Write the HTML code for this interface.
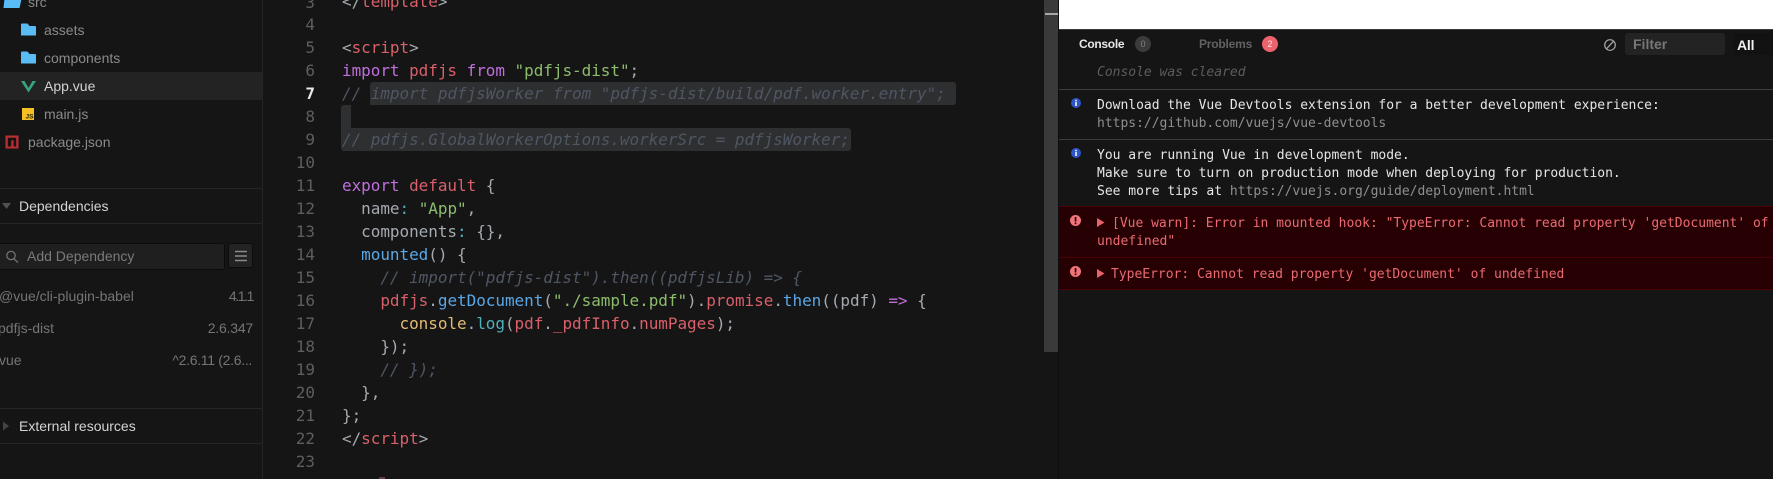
<!DOCTYPE html>
<html>
<head>
<meta charset="utf-8">
<style>
html,body{margin:0;padding:0;background:#151515;}
#r{position:relative;width:1773px;height:479px;overflow:hidden;background:#151515;font-family:"Liberation Sans",sans-serif;}
.a{position:absolute;white-space:pre;}
.f{font-size:14px;color:#8a8a8a;line-height:20px;height:20px;}
.h{font-size:14px;color:#d4d4d4;line-height:20px;height:20px;}
.dv{font-size:14px;color:#757575;line-height:20px;height:20px;}
.ln{position:absolute;left:270px;width:45px;text-align:right;font:16px/23px "DejaVu Sans Mono",monospace;color:#5e5e5e;height:23px;}
.c{position:absolute;left:342px;font:16px/23px "DejaVu Sans Mono",monospace;letter-spacing:-.05px;color:#abb2bf;white-space:pre;height:23px;margin-top:-1px;}
.k{color:#bf6fdb}.r{color:#d9606a}.g{color:#8dbd6c}.b{color:#5aa7e6}.t{color:#4fb0bd}.y{color:#e2bb73}.p{color:#a5a9b0}
.m{color:#4f5663;font-style:italic}
.sel{position:absolute;background:#2e2f30;}
.con{position:absolute;left:1097px;font:13px/18px "DejaVu Sans Mono",monospace;letter-spacing:-.01px;color:#e6e6e6;white-space:pre;height:18px;margin-top:1px;}
.u{color:#8f8f8f}
.e{color:#ea6a71}
.sep{position:absolute;height:1px;}
</style>
</head>
<body>
<div id="r">
<!-- sidebar -->
<div class="a" style="left:0;top:72px;width:262px;height:28px;background:#232323"></div>
<div class="a" style="left:262px;top:0;width:1px;height:479px;background:#262626"></div>
<svg class="a" style="left:0;top:0" width="262" height="220">
<path d="M5 -6H12L15 -3H22L19.500 8H3.500Z" fill="#5abcf5"/>
<path d="M21 24.500a1 1 0 0 1 1-1h5.500l2 2.500H35a1 1 0 0 1 1 1V35.500H21Z" fill="#5abcf5"/>
<path d="M21 52.500a1 1 0 0 1 1-1h5.500l2 2.500H35a1 1 0 0 1 1 1V63.500H21Z" fill="#5abcf5"/>
<path d="M21 81h3.500l4 7 4-7H36L28.500 92.500Z" fill="#35a77c"/>
<rect x="22" y="108" width="12" height="12" fill="#f5bf25"/>
<text x="25.500" y="118.700" font-family="Liberation Sans" font-weight="700" font-size="6.500" fill="#2a2100">JS</text>
<rect x="5.500" y="135.500" width="13" height="13" fill="#b92e33"/>
<path d="M7.800 146.500V137.800H16.200V146.500H13.600V140.200H11.200V146.500Z" fill="#1a1212"/>
<path d="M2 203H11L6.500 209Z" fill="#525252"/>
</svg>
<div class="a f" style="left:28px;top:-8px">src</div>
<div class="a f" style="left:44px;top:20px">assets</div>
<div class="a f" style="left:44px;top:48px">components</div>
<div class="a f" style="left:44px;top:76px;color:#d2d2d2">App.vue</div>
<div class="a f" style="left:44px;top:104px">main.js</div>
<div class="a f" style="left:28px;top:132px">package.json</div>
<div class="sep" style="left:0;top:188px;width:262px;background:#262626"></div>
<div class="a h" style="left:19px;top:196px">Dependencies</div>
<div class="sep" style="left:0;top:223px;width:262px;background:#262626"></div>
<div class="a" style="left:-3px;top:243px;width:226px;height:25px;background:#1f1f1f;border:1px solid #0c0c0c;border-radius:3px"></div>
<svg class="a" style="left:5px;top:250px" width="14" height="14"><circle cx="6" cy="5.500" r="4.200" fill="none" stroke="#777" stroke-width="1.200"/><path d="M9 8.800L13 12.500" stroke="#777" stroke-width="1.200"/></svg>
<div class="a dv" style="left:27px;top:246px;color:#7a7a7a">Add Dependency</div>
<div class="a" style="left:228px;top:243px;width:25px;height:25px;background:#232323;border:1px solid #0c0c0c;border-radius:3px;box-sizing:border-box"></div>
<svg class="a" style="left:234px;top:250px" width="14" height="12"><path d="M1 1.500H13M1 6H13M1 10.500H13" stroke="#8a8a8a" stroke-width="1.500"/></svg>
<div class="a dv" style="left:-1px;top:286px">@vue/cli-plugin-babel</div>
<div class="a dv" style="left:-2px;top:318px">pdfjs-dist</div>
<div class="a dv" style="left:-1px;top:350px">vue</div>
<div class="a dv" style="right:1520px;top:286px;letter-spacing:-1.400px">4.1.1</div>
<div class="a dv" style="right:1520px;top:318px;letter-spacing:-.2px">2.6.347</div>
<div class="a dv" style="right:1521px;top:350px;letter-spacing:-.3px">^2.6.11 (2.6...</div>
<div class="sep" style="left:0;top:408px;width:262px;background:#262626"></div>
<svg class="a" style="left:0;top:420px" width="14" height="12"><path d="M3 1.500L9 6L3 10.500Z" fill="#444"/></svg>
<div class="a h" style="left:19px;top:416px">External resources</div>
<div class="sep" style="left:0;top:443px;width:262px;background:#262626"></div>

<!-- gutter -->
<div class="ln" style="top:-9px">3</div>
<div class="ln" style="top:13px">4</div>
<div class="ln" style="top:36px">5</div>
<div class="ln" style="top:59px">6</div>
<div class="ln" style="top:82px;color:#e8e8e8;font-weight:700">7</div>
<div class="ln" style="top:105px">8</div>
<div class="ln" style="top:128px">9</div>
<div class="ln" style="top:151px">10</div>
<div class="ln" style="top:174px">11</div>
<div class="ln" style="top:197px">12</div>
<div class="ln" style="top:220px">13</div>
<div class="ln" style="top:243px">14</div>
<div class="ln" style="top:266px">15</div>
<div class="ln" style="top:289px">16</div>
<div class="ln" style="top:312px">17</div>
<div class="ln" style="top:335px">18</div>
<div class="ln" style="top:358px">19</div>
<div class="ln" style="top:381px">20</div>
<div class="ln" style="top:404px">21</div>
<div class="ln" style="top:427px">22</div>
<div class="ln" style="top:450px">23</div>

<!-- selection -->
<div class="sel" style="left:370px;top:82px;width:586px;height:23px;border-radius:3px 3px 3px 0"></div>
<div class="sel" style="left:341px;top:105px;width:10px;height:23px;border-radius:3px 0 0 0"></div>
<div class="sel" style="left:341px;top:128px;width:510px;height:23px;border-radius:0 3px 3px 3px"></div>

<!-- code -->
<div class="c" style="top:-9px"><span class="p">&lt;/</span><span class="r">template</span><span class="p">&gt;</span></div>
<div class="c" style="top:37px"><span class="p">&lt;</span><span class="r">script</span><span class="p">&gt;</span></div>
<div class="c" style="top:60px"><span class="k">import</span> <span class="r">pdfjs</span> <span class="k">from</span> <span class="g">"pdfjs-dist"</span><span class="p">;</span></div>
<div class="c m" style="top:83px">// import pdfjsWorker from "pdfjs-dist/build/pdf.worker.entry";</div>
<div class="c m" style="top:129px">// pdfjs.GlobalWorkerOptions.workerSrc = pdfjsWorker;</div>
<div class="c" style="top:175px"><span class="k">export</span> <span class="r">default</span> <span class="p">{</span></div>
<div class="c" style="top:198px">  <span class="p">name</span><span class="t">:</span> <span class="g">"App"</span><span class="p">,</span></div>
<div class="c" style="top:221px">  <span class="p">components</span><span class="t">:</span> <span class="p">{},</span></div>
<div class="c" style="top:244px">  <span class="b">mounted</span><span class="p">() {</span></div>
<div class="c m" style="top:267px">    // import("pdfjs-dist").then((pdfjsLib) =&gt; {</div>
<div class="c" style="top:290px">    <span class="r">pdfjs</span><span class="p">.</span><span class="b">getDocument</span><span class="p">(</span><span class="g">"./sample.pdf"</span><span class="p">).</span><span class="r">promise</span><span class="p">.</span><span class="b">then</span><span class="p">((pdf)</span> <span class="k">=&gt;</span> <span class="p">{</span></div>
<div class="c" style="top:313px">      <span class="y">console</span><span class="p">.</span><span class="t">log</span><span class="p">(</span><span class="r">pdf</span><span class="p">.</span><span class="r">_pdfInfo</span><span class="p">.</span><span class="r">numPages</span><span class="p">);</span></div>
<div class="c" style="top:336px">    <span class="p">});</span></div>
<div class="c m" style="top:359px">    // });</div>
<div class="c" style="top:382px">  <span class="p">},</span></div>
<div class="c" style="top:405px"><span class="p">};</span></div>
<div class="c" style="top:428px"><span class="p">&lt;/</span><span class="r">script</span><span class="p">&gt;</span></div>
<div class="a" style="left:379px;top:477px;width:6px;height:2px;background:#6b3a40"></div>

<!-- scrollbar -->
<div class="a" style="left:1044px;top:0;width:14px;height:352px;background:#3a3a3a"></div>
<div class="a" style="left:1045px;top:13px;width:13px;height:2px;background:#a8a8a8"></div>
<div class="a" style="left:1058px;top:0;width:1px;height:479px;background:#0e0e0e"></div>

<!-- browser -->
<div class="a" style="left:1059px;top:0;width:714px;height:29px;background:#fff"></div>
<div class="a" style="left:1059px;top:29px;width:714px;height:1px;background:#3c3c3c"></div>

<!-- console header -->
<div class="a" style="left:1079px;top:34px;font-size:12px;line-height:20px;font-weight:700;letter-spacing:-.3px;color:#e8e8e8">Console</div>
<div class="a" style="left:1135px;top:36px;width:16px;height:16px;border-radius:8px;background:#3b3b3b;color:#808080;font-size:9px;line-height:16px;text-align:center">0</div>
<div class="a" style="left:1199px;top:34px;font-size:12px;line-height:20px;font-weight:700;letter-spacing:-.2px;color:#626262">Problems</div>
<div class="a" style="left:1262px;top:36px;width:16px;height:16px;border-radius:8px;background:#ee636b;color:#f8e8e8;font-size:9px;line-height:16px;text-align:center">2</div>
<svg class="a" style="left:1603px;top:38px" width="14" height="14"><circle cx="7" cy="7" r="5.300" fill="none" stroke="#a8a8a8" stroke-width="1.200"/><path d="M3.500 10.800L10.500 3.200" stroke="#a8a8a8" stroke-width="1.200"/></svg>
<div class="a" style="left:1625px;top:33px;width:100px;height:22px;background:#232323;border-radius:3px"></div>
<div class="a" style="left:1633px;top:34px;font-size:14px;line-height:20px;font-weight:700;color:#777">Filter</div>
<div class="a" style="left:1733px;top:33px;width:40px;height:22px;background:#121212;border-radius:3px 0 0 3px"></div>
<div class="a" style="left:1737px;top:35px;font-size:14px;line-height:20px;font-weight:700;letter-spacing:-.2px;color:#f0f0f0">All</div>

<!-- console -->
<div class="con" style="top:63px;color:#5c5c5c;font-style:italic">Console was cleared</div>
<div class="sep" style="left:1059px;top:89px;width:714px;background:#3d3d3d"></div>
<svg class="a" style="left:1071px;top:98px" width="10" height="10"><circle cx="5" cy="5" r="5" fill="#2b55c9"/><rect x="4.200" y="4" width="1.700" height="4" fill="#e8ecf8"/><rect x="4.200" y="1.800" width="1.700" height="1.500" fill="#e8ecf8"/></svg>
<div class="con" style="top:96px">Download the Vue Devtools extension for a better development experience:</div>
<div class="con u" style="top:114px">https://github.com/vuejs/vue-devtools</div>
<div class="sep" style="left:1059px;top:139px;width:714px;background:#3d3d3d"></div>
<svg class="a" style="left:1071px;top:148px" width="10" height="10"><circle cx="5" cy="5" r="5" fill="#2b55c9"/><rect x="4.200" y="4" width="1.700" height="4" fill="#e8ecf8"/><rect x="4.200" y="1.800" width="1.700" height="1.500" fill="#e8ecf8"/></svg>
<div class="con" style="top:146px">You are running Vue in development mode.</div>
<div class="con" style="top:164px">Make sure to turn on production mode when deploying for production.</div>
<div class="con" style="top:182px">See more tips at <span class="u">https://vuejs.org/guide/deployment.html</span></div>

<div class="a" style="left:1059px;top:206px;width:714px;height:83px;background:#260002"></div>
<div class="sep" style="left:1059px;top:206px;width:714px;background:#4a0006"></div>
<div class="sep" style="left:1059px;top:257px;width:714px;height:1px;background:#4a0006"></div>
<div class="sep" style="left:1059px;top:289px;width:714px;background:#4a0006"></div>
<svg class="a" style="left:1070px;top:215px" width="11" height="11"><circle cx="5.500" cy="5.500" r="5.500" fill="#f2747b"/><rect x="4.700" y="2" width="1.700" height="4.500" fill="#2a0004"/><rect x="4.700" y="7.500" width="1.700" height="1.700" fill="#2a0004"/></svg>
<svg class="a" style="left:1070px;top:266px" width="11" height="11"><circle cx="5.500" cy="5.500" r="5.500" fill="#f2747b"/><rect x="4.700" y="2" width="1.700" height="4.500" fill="#2a0004"/><rect x="4.700" y="7.500" width="1.700" height="1.700" fill="#2a0004"/></svg>
<svg class="a" style="left:1097px;top:218px" width="8" height="9"><path d="M0 0L7.500 4.500L0 9Z" fill="#e8636b"/></svg>
<svg class="a" style="left:1097px;top:269px" width="8" height="9"><path d="M0 0L7.500 4.500L0 9Z" fill="#e8636b"/></svg>
<div class="con e" style="left:1112px;top:214px">[Vue warn]: Error in mounted hook: "TypeError: Cannot read property 'getDocument' of</div>
<div class="con e" style="top:232px">undefined"</div>
<div class="con e" style="left:1111px;top:265px">TypeError: Cannot read property 'getDocument' of undefined</div>
</div>
</body>
</html>
